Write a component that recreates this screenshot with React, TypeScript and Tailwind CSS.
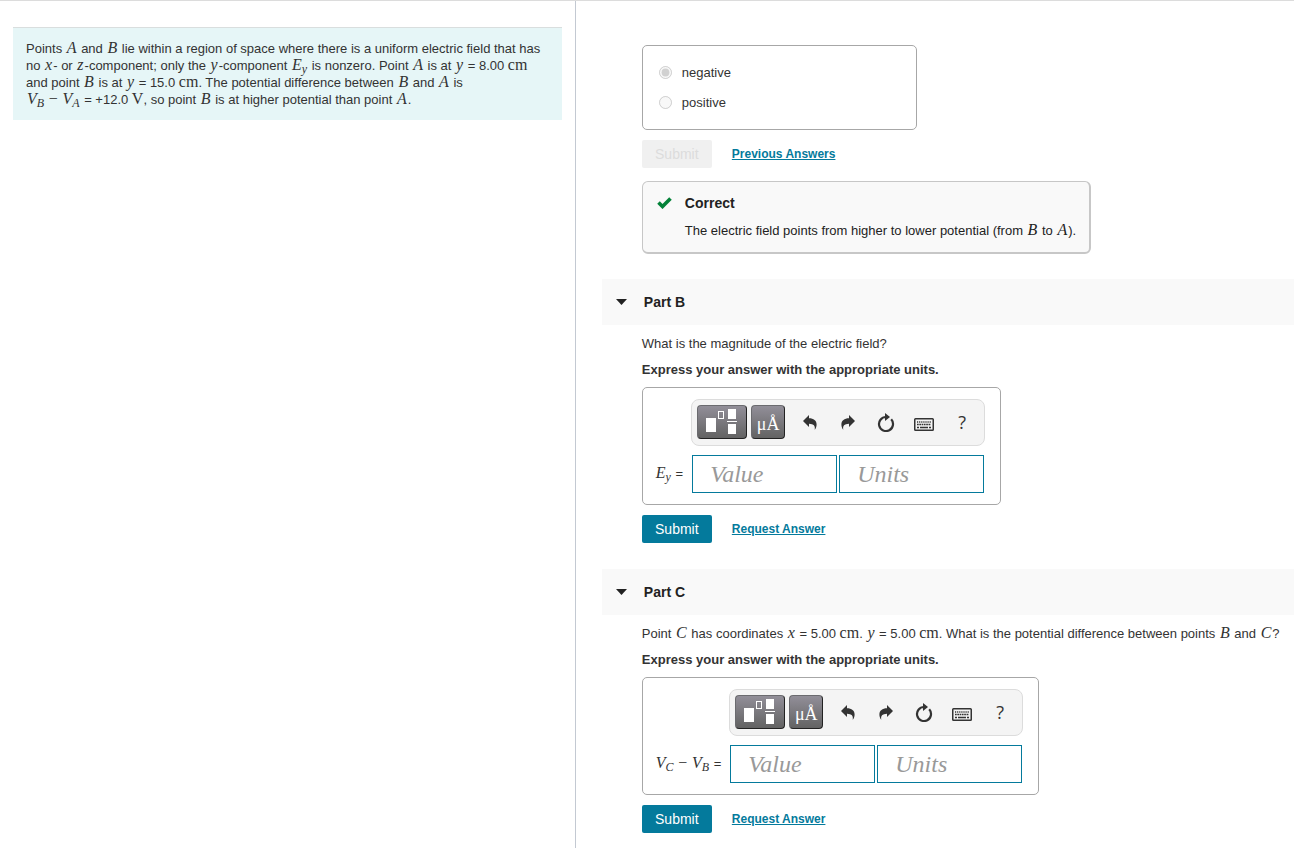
import { useState } from "react";
import type { ReactNode } from "react";

interface AnswerFormProps {
  id: string;
  label: ReactNode;
}

interface PartProps extends AnswerFormProps {
  title: string;
  children: ReactNode;
}

// Italic variable, with an optional subscript
function Var({ children, sub }: { children: ReactNode; sub?: string }) {
  return (
    <i className="px-px font-['Liberation_Serif',serif] text-[16px] leading-0">
      {children}
      {sub && <sub className="bottom-[-3px] text-[12px]">{sub}</sub>}
    </i>
  );
}

function Unit({ children }: { children: ReactNode }) {
  return (
    <span className="font-['Liberation_Serif',serif] text-[16px] leading-0">
      {children}
    </span>
  );
}

function UndoIcon() {
  return (
    <svg width="14" height="15" viewBox="0 0 14 15" fill="#333" aria-hidden="true">
      <path d="M6 0v3.200c4.600 0 7.600 2.300 7.600 6.200 0 2-.6 3.900-1.900 5.300.8-3.800-.9-5.800-5.700-5.900V12L0 6z" />
    </svg>
  );
}

function RedoIcon() {
  return (
    <svg width="14" height="15" viewBox="0 0 14 15" fill="#333" aria-hidden="true">
      <path d="M8 0v3.200C3.400 3.200.4 5.500.4 9.400c0 2 .6 3.900 1.900 5.300-.8-3.800.9-5.800 5.700-5.900V12l6-6z" />
    </svg>
  );
}

function ResetIcon() {
  return (
    <svg width="18" height="19" viewBox="0 0 18 19" fill="none" aria-hidden="true">
      <path d="M14.200 6.300A7 7 0 1 1 9 4" stroke="#333" strokeWidth="2.200" />
      <path d="M8 0l5 4-5 4z" fill="#333" />
    </svg>
  );
}

function KeyboardIcon() {
  return (
    <svg width="20" height="13" viewBox="0 0 20 13" fill="none" aria-hidden="true">
      <rect x="0.750" y="0.750" width="18.500" height="11.500" rx="0.800" stroke="#333" strokeWidth="1.500" />
      <path d="M3 4h14" stroke="#333" strokeWidth="1.500" strokeDasharray="1.200 0.900" />
      <path d="M3 6.500h14" stroke="#333" strokeWidth="1.500" strokeDasharray="1.700 0.600" />
      <path d="M3 9.500h2M6 9.500h8M15 9.500h2" stroke="#333" strokeWidth="1.500" />
    </svg>
  );
}

function TemplateIcon() {
  return (
    <svg width="32" height="26" viewBox="0 0 32 26" aria-hidden="true">
      <rect x="0" y="9" width="10" height="14" fill="#fff" />
      <rect x="12.500" y="2.500" width="5" height="7" fill="none" stroke="#fff" />
      <rect x="22" y="0" width="8" height="10" fill="#fff" />
      <rect x="21" y="12" width="10" height="1" fill="#fff" />
      <rect x="22" y="15" width="8" height="10" fill="#fff" />
    </svg>
  );
}

const darkButton =
  "flex h-[34px] items-center justify-center rounded-[4px] border border-[#6b6b6f] border-r-[#222] border-b-[#222] bg-linear-to-b from-[#928f99] to-[#636363] text-white";
const iconButton = "flex h-[34px] w-[38px] items-center justify-center text-[#333]";
const field =
  "h-[38px] min-w-0 flex-1 border border-[#047a9c] bg-white px-[17px] font-['Liberation_Serif',serif] text-[24px] italic text-[#333] outline-none placeholder:text-[#999]";
const link = "text-[12px] font-bold text-[#047a9c] underline";

function AnswerForm({ id, label }: AnswerFormProps) {
  const [value, setValue] = useState("");
  const [units, setUnits] = useState("");

  const reset = () => {
    setValue("");
    setUnits("");
  };

  return (
    <form onSubmit={(e) => e.preventDefault()}>
      <div className="grid w-fit grid-cols-[auto_294px] gap-x-2 gap-y-[9px] rounded-[5px] border border-[#a7a7a7] py-[11px] pr-[15px] pl-3">
        <div className="col-start-2 flex items-center rounded-[8px] border border-[#dcdcdc] bg-[#f4f4f4] p-[5px] pr-[3px] pb-[6px]">
          <button type="button" aria-label="Templates" className={`${darkButton} w-[50px]`}>
            <TemplateIcon />
          </button>
          <button
            type="button"
            aria-label="Symbols"
            className={`${darkButton} mr-[6px] ml-1 w-[34px] pt-1 font-['Liberation_Serif',serif] text-[18px]`}
          >
            μÅ
          </button>
          <button type="button" aria-label="Undo" className={iconButton}>
            <UndoIcon />
          </button>
          <button type="button" aria-label="Redo" className={iconButton}>
            <RedoIcon />
          </button>
          <button type="button" aria-label="Reset" onClick={reset} className={iconButton}>
            <ResetIcon />
          </button>
          <button type="button" aria-label="Keyboard shortcuts" className={`${iconButton} pt-1`}>
            <KeyboardIcon />
          </button>
          <button
            type="button"
            aria-label="Help"
            className={`${iconButton} font-['Open_Sans',sans-serif] text-[18px]`}
          >
            ?
          </button>
        </div>
        <label htmlFor={`${id}-value`} className="self-center whitespace-nowrap">
          {label} =
        </label>
        <div className="flex gap-[2px] px-px">
          <input
            id={`${id}-value`}
            type="text"
            placeholder="Value"
            value={value}
            onChange={(e) => setValue(e.target.value)}
            className={field}
          />
          <input
            type="text"
            aria-label="Units"
            placeholder="Units"
            value={units}
            onChange={(e) => setUnits(e.target.value)}
            className={field}
          />
        </div>
      </div>
      <div className="mt-[10px] flex items-center gap-5">
        <button
          type="submit"
          className="h-7 w-[70px] rounded-[2px] bg-[#047a9c] text-[14px] text-white"
        >
          Submit
        </button>
        <a href="#request" className={link}>
          Request Answer
        </a>
      </div>
    </form>
  );
}

function Part({ id, title, label, children }: PartProps) {
  return (
    <section className="pb-[26px]">
      <h2 className="flex h-[46px] items-center bg-[#f9f9f9] pl-[14px] text-[14px] font-bold text-[#222]">
        <svg width="11" height="6" viewBox="0 0 11 6" className="mr-[17px]" aria-hidden="true">
          <path d="M0 0h11L5.500 6z" fill="#222" />
        </svg>
        {title}
      </h2>
      <div className="pt-[9px] pl-10">
        <p className="leading-5">{children}</p>
        <p className="mt-[6px] mb-[7px] leading-5 font-bold">
          Express your answer with the appropriate units.
        </p>
        <AnswerForm id={id} label={label} />
      </div>
    </section>
  );
}

export default function App() {
  return (
    <div className="flex min-h-screen border-t border-[#dcdcdc] bg-white font-['Liberation_Sans',Arial,sans-serif] text-[13px] text-[#333]">
      <aside className="w-[44.5%] shrink-0 border-r border-[#c3c9d2] px-[13px] pt-[26px]">
        <p className="border-t border-[#d9dede] bg-[#e6f6f7] px-[13px] py-3 leading-[17px]">
          Points <Var>A</Var> and <Var>B</Var> lie within a region of space where there is a
          uniform electric field that has no <Var>x</Var>- or <Var>z</Var>-component; only the{" "}
          <Var>y</Var>-component <Var sub="y">E</Var> is nonzero. Point <Var>A</Var> is at{" "}
          <Var>y</Var> = 8.00 <Unit>cm</Unit> and point <Var>B</Var> is at <Var>y</Var> = 15.0{" "}
          <Unit>cm</Unit>. The potential difference between <Var>B</Var> and <Var>A</Var> is{" "}
          <span className="whitespace-nowrap">
            <Var sub="B">V</Var> <Unit>−</Unit> <Var sub="A">V</Var> = +12.0 <Unit>V</Unit>, so
          </span>{" "}
          point <Var>B</Var> is at higher potential than point <Var>A</Var>.
        </p>
      </aside>

      <main className="min-w-0 flex-1 pl-[26px]">
        <section className="pt-11 pb-[25px] pl-10">
          <fieldset className="flex h-[85px] w-[275px] flex-col gap-[10px] rounded-[5px] border border-[#a7a7a7] px-4 py-[17px]">
            <label className="flex h-5 items-center gap-[10px]">
              <input type="radio" name="sign" disabled defaultChecked className="size-[13px]" />
              negative
            </label>
            <label className="flex h-5 items-center gap-[10px]">
              <input type="radio" name="sign" disabled className="size-[13px]" />
              positive
            </label>
          </fieldset>
          <div className="mt-[10px] flex items-center gap-5">
            <button
              type="button"
              disabled
              className="h-7 w-[70px] rounded-[2px] bg-[#f0f0f0] text-[14px] text-[#dcdcdc]"
            >
              Submit
            </button>
            <a href="#previous" className={link}>
              Previous Answers
            </a>
          </div>
          <div className="mt-[13px] w-fit rounded-[6px] border border-r-2 border-b-2 border-[#c7c7c7] bg-[#f9f9f9] py-[11px] pr-[13px] pl-[14px] text-[#222]">
            <h2 className="flex h-5 items-center gap-[13px] text-[14px] font-bold">
              <svg width="15" height="12" viewBox="0 0 15 12" fill="none" aria-hidden="true">
                <path d="M1.500 5.500l4 4 8-8" stroke="#038238" strokeWidth="3.600" />
              </svg>
              Correct
            </h2>
            <p className="mt-2 pl-7 leading-5">
              The electric field points from higher to lower potential (from <Var>B</Var> to{" "}
              <Var>A</Var>).
            </p>
          </div>
        </section>

        <Part id="part-b" title="Part B" label={<Var sub="y">E</Var>}>
          What is the magnitude of the electric field?
        </Part>

        <Part
          id="part-c"
          title="Part C"
          label={
            <>
              <Var sub="C">V</Var> <Unit>−</Unit> <Var sub="B">V</Var>
            </>
          }
        >
          Point <Var>C</Var> has coordinates <Var>x</Var> = 5.00 <Unit>cm</Unit>. <Var>y</Var> =
          5.00 <Unit>cm</Unit>. What is the potential difference between points <Var>B</Var> and{" "}
          <Var>C</Var>?
        </Part>
      </main>
    </div>
  );
}
